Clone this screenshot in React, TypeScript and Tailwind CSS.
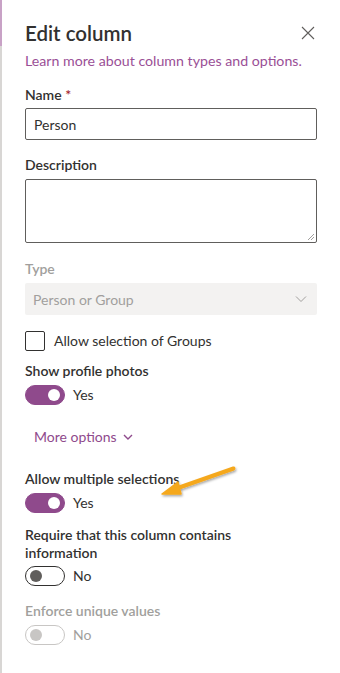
import React from "react";

const font = "font-['Segoe_UI','Lato','Noto_Sans',sans-serif]";

type ToggleProps = { state: "on" | "off" | "disabled"; label: string };

const Toggle = ({ state, label }: ToggleProps) => {
  const track =
    state === "on"
      ? "bg-[#8f4a8c] border-[#8f4a8c] justify-end"
      : state === "off"
      ? "bg-white border-[#323130] justify-start"
      : "bg-white border-[#c8c6c4] justify-start";
  const thumb =
    state === "on" ? "bg-white" : state === "off" ? "bg-[#605e5c]" : "bg-[#c8c6c4]";
  const text = state === "disabled" ? "text-[#a19f9d]" : "text-[#323130]";
  return (
    <div className="flex items-center mt-[4px] h-[20px]">
      <div className={`flex items-center w-[40px] h-[20px] rounded-full border px-[4px] ${track}`}>
        <div className={`w-[12px] h-[12px] rounded-full ${thumb}`} />
      </div>
      <span className={`ml-[8px] text-[14px] leading-[20px] ${text}`}>{label}</span>
    </div>
  );
};

const Label = ({ children, className = "" }: { children: React.ReactNode; className?: string }) => (
  <div className={`text-[14px] leading-[20px] font-semibold text-[#323130] ${className}`}>{children}</div>
);

export default function App() {
  return (
    <div className={`relative flex w-[340px] h-[673px] bg-white overflow-hidden ${font}`}>
      {/* left edge */}
      <div className="flex flex-col w-[2px] shrink-0">
        <div className="h-[46px] bg-[#c8a2c6]" />
        <div className="flex-1 bg-[#d8d6d4]" />
      </div>

      <div className="flex flex-col flex-1 pl-[23px] pr-[23px] pt-[19px]">
        <div className="flex items-center justify-between h-[28px]">
          <h1 className="text-[20.5px] leading-[28px] font-semibold text-[#323130]">Edit column</h1>
          <svg width="14" height="14" viewBox="0 0 14 14" className="mr-[2px]">
            <path d="M1 1 L13 13 M13 1 L1 13" stroke="#605e5c" strokeWidth="1.1" fill="none" />
          </svg>
        </div>
        <a className="mt-[4px] text-[14.2px] leading-[20px] text-[#9a4f96]">
          Learn more about column types and options.
        </a>

        <Label className="mt-[14px]">
          Name <span className="text-[#a4262c]">*</span>
        </Label>
        <div className="mt-[3px] h-[32px] border border-[#605e5c] rounded-[2px] flex items-center px-[8px] text-[14px] text-[#323130]">
          Person
        </div>

        <Label className="mt-[15px]">Description</Label>
        <div className="relative mt-[4px] h-[64px] border border-[#605e5c] rounded-[2px]">
          <svg width="8" height="8" viewBox="0 0 8 8" className="absolute right-[1px] bottom-[1px]">
            <path d="M7 1 L1 7 M7 4 L4 7" stroke="#a19f9d" strokeWidth="1" />
          </svg>
        </div>

        <div className="mt-[16px] text-[14px] leading-[20px] font-semibold text-[#a19f9d]">Type</div>
        <div className="mt-[4px] h-[32px] bg-[#f3f2f1] rounded-[2px] flex items-center justify-between px-[8px] text-[14px] text-[#a19f9d]">
          <span>Person or Group</span>
          <svg width="12" height="8" viewBox="0 0 12 8" className="mr-[2px]">
            <path d="M1 1.5 L6 6.5 L11 1.5" stroke="#a19f9d" strokeWidth="1" fill="none" />
          </svg>
        </div>

        <div className="mt-[16px] flex items-center h-[20px]">
          <div className="w-[20px] h-[20px] border border-[#323130] rounded-[2px]" />
          <span className="ml-[9px] text-[14px] leading-[20px] text-[#323130]">Allow selection of Groups</span>
        </div>

        <Label className="mt-[10px]">Show profile photos</Label>
        <Toggle state="on" label="Yes" />

        <div className="mt-[15px] h-[32px] flex items-center pl-[9px] text-[14px] text-[#8f4a8c]">
          More options
          <svg width="10" height="6" viewBox="0 0 10 6" className="ml-[6px] mt-[2px]">
            <path d="M1 1 L5 5 L9 1" stroke="#8f4a8c" strokeWidth="1.4" fill="none" />
          </svg>
        </div>

        <Label className="mt-[17px]">Allow multiple selections</Label>
        <Toggle state="on" label="Yes" />

        <div className="mt-[13px] max-w-[240px] text-[14px] leading-[18px] font-semibold text-[#323130]">
          Require that this column contains information
        </div>
        <Toggle state="off" label="No" />

        <div className="mt-[15px] text-[14px] leading-[20px] font-semibold text-[#a19f9d]">Enforce unique values</div>
        <Toggle state="disabled" label="No" />
      </div>

      {/* annotation arrow */}
      <svg
        width="340"
        height="673"
        viewBox="0 0 340 673"
        className="absolute left-0 top-0 pointer-events-none"
      >
        <defs>
          <filter id="sh" x="-20%" y="-20%" width="140%" height="140%">
            <feDropShadow dx="1" dy="1.5" stdDeviation="1.2" floodColor="#000" floodOpacity="0.35" />
          </filter>
        </defs>
        <g filter="url(#sh)">
          <path d="M233.5 468.5 L175 489" stroke="#f5a81e" strokeWidth="4" strokeLinecap="round" fill="none" />
          <path d="M162 494 L178 482 L181 494 Z" fill="#f5a81e" stroke="#f5a81e" strokeWidth="1.5" strokeLinejoin="round" />
        </g>
      </svg>
    </div>
  );
}
